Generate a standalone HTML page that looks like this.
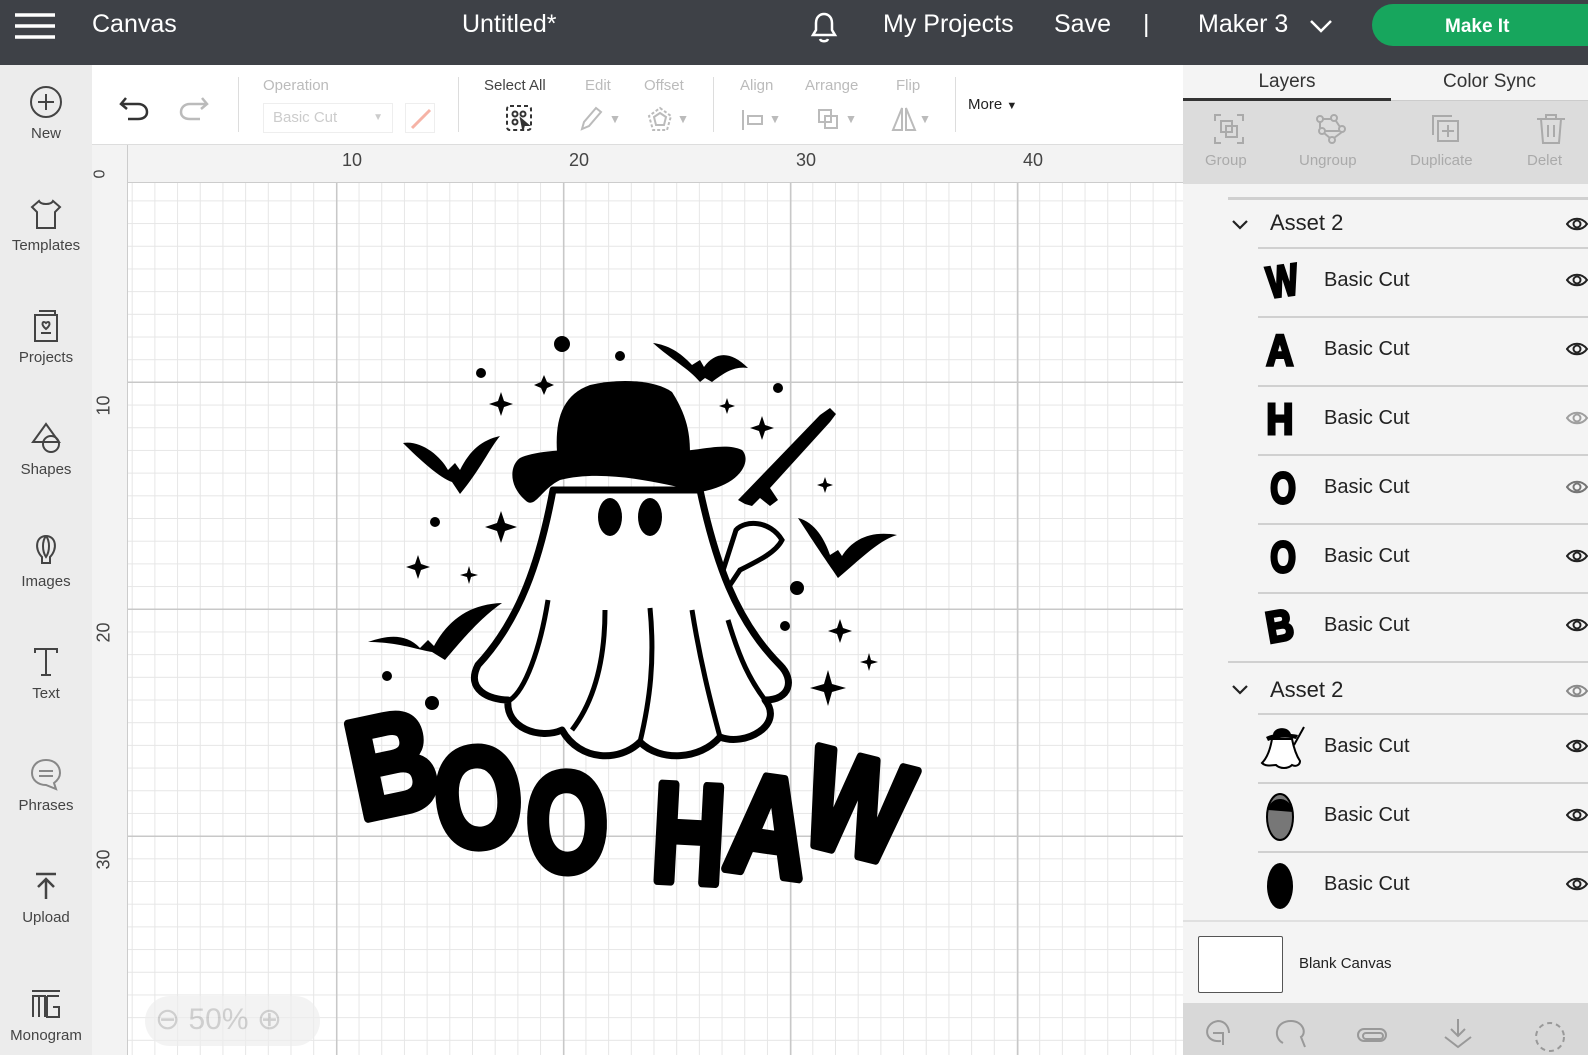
<!DOCTYPE html>
<html><head><meta charset="utf-8"><style>
*{margin:0;padding:0;box-sizing:border-box}
html{width:1588px;height:1055px;overflow:hidden}
body{width:1588px;height:1055px;overflow:hidden;position:relative;font-family:"Liberation Sans",sans-serif;background:#fff}
.abs{position:absolute}
#top{left:0;top:0;width:1588px;height:65px;background:#3e4147;color:#fff;overflow:hidden}
#top .t{position:absolute;top:10px;font-size:25px}
#make{left:1372px;top:4px;width:216px;height:42px;background:#17a65d;border-radius:21px 0 0 21px;color:#fff;font-size:19px;font-weight:bold;padding:12px 0 0 73px}
#side{left:0;top:65px;width:92px;height:990px;background:#ececec}
.si{position:absolute;left:0;width:92px;text-align:center;font-size:15px;color:#444}
.si svg{display:block;margin:0 auto 6px}
#tool{left:92px;top:65px;width:1091px;height:80px;background:#fff;border-bottom:1px solid #ddd}
.tl{position:absolute;font-size:15px;color:#bbb}
.sep{position:absolute;top:12px;width:1px;height:55px;background:#ddd}
#rtop{left:92px;top:145px;width:1091px;height:38px;background:#f3f3f3;border-bottom:1px solid #ccc}
#rleft{left:92px;top:145px;width:36px;height:910px;background:#f3f3f3;border-right:1px solid #ccc;overflow:hidden}
#cv{left:128px;top:183px;width:1055px;height:872px;overflow:hidden;background:#fff}
#grid{position:absolute;left:-19px;top:-27px;width:1100px;height:900px;
background-image:
linear-gradient(90deg,#c8c8c8 1.5px,transparent 1.5px),
linear-gradient(0deg,#c8c8c8 1.5px,transparent 1.5px),
linear-gradient(90deg,#e6e6e6 1px,transparent 1px),
linear-gradient(0deg,#e6e6e6 1px,transparent 1px);
background-size:227px 227px,227px 227px,22.7px 22.7px,22.7px 22.7px}
#panel{left:1183px;top:65px;width:405px;height:990px;background:#f4f4f4;overflow:hidden}
.row{position:absolute;left:1258px;width:330px;height:69px;border-top:2px solid #d0d0d0;overflow:hidden}
.row .n{position:absolute;left:66px;top:20px;font-size:20px;color:#222}
.eye{position:absolute;right:0;top:22px}
.hd{position:absolute;left:1228px;width:360px;border-top:2px solid #d0d0d0;height:50px;overflow:hidden}
.hd .n{position:absolute;left:42px;top:10px;font-size:22px;color:#222}
.lt{position:absolute;font:900 44px 'Liberation Sans',sans-serif;stroke:#000;-webkit-text-stroke:3px #000}
</style></head><body>

<div id="top" class="abs">
 <svg class="abs" style="left:15px;top:12px" width="40" height="28"><g stroke="#fff" stroke-width="3.5"><line x1="0" y1="3" x2="40" y2="3"/><line x1="0" y1="14" x2="40" y2="14"/><line x1="0" y1="25" x2="40" y2="25"/></g></svg>
 <div class="t" style="left:92px">Canvas</div>
 <div class="t" style="left:462px">Untitled*</div>
 <svg class="abs" style="left:808px;top:10px" width="32" height="34" fill="none" stroke="#fff" stroke-width="2.5"><path d="M5 25 L27 25 L24 20 L24 13 C24 7 20 4 16 4 C12 4 8 7 8 13 L8 20 Z"/><path d="M12 29 C13 32 19 32 20 29"/></svg>
 <div class="t" style="left:883px">My Projects</div>
 <div class="t" style="left:1054px">Save</div>
 <div class="t" style="left:1143px">|</div>
 <div class="t" style="left:1198px">Maker 3</div>
 <svg class="abs" style="left:1309px;top:18px" width="24" height="16" fill="none" stroke="#fff" stroke-width="2.5"><path d="M2 3 L12 13 L22 3"/></svg>
 <div id="make" class="abs">Make It</div>
</div>

<div id="side" class="abs">
 <div class="si" style="top:20px"><svg width="34" height="34" fill="none" stroke="#444" stroke-width="2"><circle cx="17" cy="17" r="15"/><path d="M17 9v16M9 17h16"/></svg>New</div>
 <div class="si" style="top:132px"><svg width="34" height="34" fill="none" stroke="#444" stroke-width="2"><path d="M10 4 L3 10 L8 15 L8 31 L26 31 L26 15 L31 10 L24 4 C22 8 12 8 10 4Z"/></svg>Templates</div>
 <div class="si" style="top:244px"><svg width="34" height="34" fill="none" stroke="#444" stroke-width="2"><rect x="6" y="6" width="22" height="26"/><path d="M10 2h16v4"/><path d="M12 24h10"/><path d="M17 20 C11 15 14 11 17 14 C20 11 23 15 17 20Z"/></svg>Projects</div>
 <div class="si" style="top:356px"><svg width="34" height="34" fill="none" stroke="#444" stroke-width="2"><path d="M17 3 L30 21 L4 21 Z"/><circle cx="22" cy="23" r="8"/></svg>Shapes</div>
 <div class="si" style="top:468px"><svg width="34" height="34" fill="none" stroke="#444" stroke-width="2"><path d="M17 3 C7 3 5 16 13 24 L13 30 L21 30 L21 24 C29 16 27 3 17 3Z"/><path d="M17 3 C13 8 13 18 17 24 C21 18 21 8 17 3"/></svg>Images</div>
 <div class="si" style="top:580px"><svg width="34" height="34" fill="none" stroke="#444" stroke-width="2"><path d="M6 8V4h22v4M17 4v26M12 30h10"/></svg>Text</div>
 <div class="si" style="top:692px"><svg width="34" height="34" fill="none" stroke="#888" stroke-width="2"><path d="M17 3 C8 3 3 9 3 16 C3 23 9 28 17 28 L27 32 L25 26 C29 23 31 20 31 16 C31 9 26 3 17 3Z"/><path d="M10 14h14M10 19h14"/></svg>Phrases</div>
 <div class="si" style="top:804px"><svg width="34" height="34" fill="none" stroke="#444" stroke-width="2.5"><path d="M7 5h20M17 30V10M9 18l8-8 8 8"/></svg>Upload</div>
 <div class="si" style="top:922px;height:68px;overflow:hidden"><svg width="34" height="34" fill="none" stroke="#444" stroke-width="2"><path d="M3 4h28M4 30V9h12v21M10 9v21M18 9h12M18 9v21h12V20h-6"/></svg>Monogram</div>
</div>

<div id="tool" class="abs">
 <svg class="abs" style="left:26px;top:30px" width="32" height="26" fill="none" stroke="#333" stroke-width="2.5"><path d="M8 3 L3 9 L9 14"/><path d="M3 9 H20 C26 9 29 13 29 17 C29 21 26 24 20 24 H10"/></svg>
 <svg class="abs" style="left:86px;top:30px" width="32" height="26" fill="none" stroke="#bbb" stroke-width="2.5"><path d="M24 3 L29 9 L23 14"/><path d="M29 9 H12 C6 9 3 13 3 17 C3 21 6 24 12 24 H22"/></svg>
 <div class="sep" style="left:146px"></div>
 <div class="tl" style="left:171px;top:12px">Operation</div>
 <div class="abs" style="left:171px;top:38px;width:130px;height:30px;border:1px solid #eee;font-size:15px;color:#ccc;padding:5px 9px">Basic Cut <span style="float:right;font-size:10px;margin-top:3px">▼</span></div>
 <div class="abs" style="left:313px;top:38px;width:30px;height:30px;border:1px solid #eee"><svg width="30" height="30"><line x1="6" y1="24" x2="24" y2="6" stroke="#f6b3a6" stroke-width="3"/></svg></div>
 <div class="sep" style="left:366px"></div>
 <div class="tl" style="left:392px;top:12px;color:#444">Select All</div>
 <svg class="abs" style="left:412px;top:38px" width="30" height="30" fill="none" stroke="#333" stroke-width="2"><rect x="3" y="3" width="24" height="24" rx="3" stroke-dasharray="4 3"/><circle cx="11" cy="11" r="2.5"/><circle cx="19" cy="11" r="2.5"/><circle cx="11" cy="19" r="2.5"/><path d="M17 16 L24 22 L20 22 L19 26Z" fill="#333"/></svg>
 <div class="tl" style="left:493px;top:12px">Edit</div>
 <svg class="abs" style="left:486px;top:40px" width="44" height="28" fill="none" stroke="#bbb" stroke-width="2"><path d="M4 24 L6 17 L18 3 L23 7 L11 21 Z"/><path d="M35 12 l4 0 l-2 4z" fill="#bbb"/></svg>
 <div class="tl" style="left:552px;top:12px">Offset</div>
 <svg class="abs" style="left:554px;top:40px" width="44" height="28" fill="none" stroke="#bbb" stroke-width="2"><path d="M14 3 L25 11 L21 25 L7 25 L3 11 Z" stroke-dasharray="3 2"/><path d="M14 8 L20 12 L18 20 L10 20 L8 12 Z"/><path d="M35 12 l4 0 l-2 4z" fill="#bbb"/></svg>
 <div class="sep" style="left:621px"></div>
 <div class="tl" style="left:648px;top:12px">Align</div>
 <svg class="abs" style="left:648px;top:42px" width="44" height="26" fill="none" stroke="#bbb" stroke-width="2"><path d="M3 3v20"/><rect x="8" y="9" width="14" height="8"/><path d="M33 10 l4 0 l-2 4z" fill="#bbb"/></svg>
 <div class="tl" style="left:713px;top:12px">Arrange</div>
 <svg class="abs" style="left:724px;top:42px" width="44" height="26" fill="none" stroke="#bbb" stroke-width="2"><rect x="3" y="3" width="12" height="12"/><rect x="9" y="9" width="12" height="12"/><path d="M33 10 l4 0 l-2 4z" fill="#bbb"/></svg>
 <div class="tl" style="left:804px;top:12px">Flip</div>
 <svg class="abs" style="left:798px;top:40px" width="44" height="28" fill="none" stroke="#bbb" stroke-width="2"><path d="M12 3 L3 25 H12Z M16 3 L25 25 H16Z"/><path d="M33 12 l4 0 l-2 4z" fill="#bbb"/></svg>
 <div class="sep" style="left:863px"></div>
 <div class="tl" style="left:876px;top:31px;color:#222">More <span style="font-size:11px">▼</span></div>
</div>

<div id="rtop" class="abs">
 <div class="abs" style="left:250px;top:5px;font-size:18px;color:#444">10</div>
 <div class="abs" style="left:477px;top:5px;font-size:18px;color:#444">20</div>
 <div class="abs" style="left:704px;top:5px;font-size:18px;color:#444">30</div>
 <div class="abs" style="left:931px;top:5px;font-size:18px;color:#444">40</div>
</div>
<div id="rleft" class="abs">
 <div class="abs" style="left:4px;top:20px;font-size:16px;color:#444;transform:rotate(-90deg)">0</div>
 <div class="abs" style="left:2px;top:250px;font-size:18px;color:#444;transform:rotate(-90deg)">10</div>
 <div class="abs" style="left:2px;top:477px;font-size:18px;color:#444;transform:rotate(-90deg)">20</div>
 <div class="abs" style="left:2px;top:704px;font-size:18px;color:#444;transform:rotate(-90deg)">30</div>
</div>
<div id="cv" class="abs"><div id="grid"></div></div>

<div class="abs" style="left:145px;top:996px;width:175px;height:50px;background:#eee;border-radius:25px;opacity:.7;font-size:30px;color:#bbb;padding:6px 10px">⊖ 50% ⊕</div>

<svg class="abs" style="left:0;top:0" width="1183" height="1055">
 <g fill="#000">
  <circle cx="562" cy="344" r="8"/><circle cx="620" cy="356" r="5"/><circle cx="481" cy="373" r="5"/><circle cx="778" cy="388" r="5"/>
  <circle cx="435" cy="522" r="5"/><circle cx="797" cy="588" r="7"/><circle cx="785" cy="626" r="5"/><circle cx="387" cy="676" r="5"/><circle cx="432" cy="703" r="7"/>
  <path d="M544 375 l3 7 7 3 -7 3 -3 7 -3 -7 -7 -3 7 -3z"/>
  <path d="M501 392 l3 9 9 3 -9 3 -3 9 -3 -9 -9 -3 9 -3z"/>
  <path d="M727 398 l2 6 6 2 -6 2 -2 6 -2 -6 -6 -2 6 -2z"/>
  <path d="M762 416 l3 9 9 3 -9 3 -3 9 -3 -9 -9 -3 9 -3z"/>
  <path d="M825 477 l2 6 6 2 -6 2 -2 6 -2 -6 -6 -2 6 -2z"/>
  <path d="M501 511 l4 12 12 4 -12 4 -4 12 -4 -12 -12 -4 12 -4z"/>
  <path d="M418 555 l3 9 9 3 -9 3 -3 9 -3 -9 -9 -3 9 -3z"/>
  <path d="M469 566 l2 7 7 2 -7 2 -2 7 -2 -7 -7 -2 7 -2z"/>
  <path d="M840 619 l3 9 9 3 -9 3 -3 9 -3 -9 -9 -3 9 -3z"/>
  <path d="M869 653 l2 7 7 2 -7 2 -2 7 -2 -7 -7 -2 7 -2z"/>
  <path d="M828 670 l4 14 14 4 -14 4 -4 14 -4 -14 -14 -4 14 -4z"/>
  <path d="M653 343 C668 345 680 352 692 365 L700 360 L704 367 C715 352 730 350 748 368 C735 366 725 372 712 382 L705 378 L700 382 C688 368 672 360 653 343Z"/>
  <path d="M403 443 C420 440 440 455 448 470 L455 463 L460 470 C470 450 482 440 500 436 C490 448 480 470 460 494 L452 482 C440 478 420 460 403 443Z"/>
  <path d="M798 518 C815 522 825 540 830 555 L838 550 L842 556 C852 540 870 530 897 535 C880 540 865 555 838 578 C833 570 825 560 798 518Z"/>
  <path d="M368 642 C385 636 405 632 420 648 L428 640 L434 646 C448 620 470 604 502 603 C485 615 470 630 445 660 L432 652 C418 650 398 642 368 642Z"/>
  <path d="M738 500 L820 415 L830 408 L836 414 L830 422 L770 488 L778 500 L770 506 L760 498 L752 506 L745 504Z"/>
  <path d="M720 580 L736 530 C745 520 770 520 782 540 C776 552 760 560 740 570 L728 588Z" fill="#fff" stroke="#000" stroke-width="5"/>
  <path d="M553 490 C540 560 520 620 478 665 C465 690 490 700 508 700 C505 728 540 740 562 730 C580 762 620 762 640 742 C660 762 700 760 720 737 C745 747 785 725 765 700 C790 700 795 680 780 665 C735 620 715 560 700 490 Z" fill="#fff" stroke="#000" stroke-width="7" stroke-linejoin="round"/>
  <path d="M548 600 C540 650 525 690 510 700 M605 610 C605 660 595 700 572 730 M650 608 C655 660 650 700 640 742 M692 610 C700 660 710 700 720 737 M728 620 C740 660 750 680 765 700" fill="none" stroke="#000" stroke-width="5"/>
  <ellipse cx="610" cy="517" rx="12" ry="19"/><ellipse cx="650" cy="517" rx="12" ry="19"/>
  <path d="M520 458 C540 448 600 448 640 452 C690 456 720 440 742 450 C752 460 742 485 700 492 C650 480 600 470 560 480 C540 490 535 510 525 500 C508 485 510 465 520 458Z"/>
  <path d="M557 452 C555 420 562 395 590 385 C620 378 655 380 672 392 C690 420 690 440 690 458 C650 462 600 462 557 452Z"/>
 </g>
 <g font-family="Liberation Sans,sans-serif" font-weight="900" font-size="140" fill="#000" stroke="#000" stroke-width="9" stroke-linejoin="round">
  <text transform="translate(360,820) rotate(-12) scale(0.85,1)">B</text>
  <text transform="translate(440,850) rotate(-6) scale(0.8,1)">O</text>
  <text transform="translate(528,872) rotate(-2) scale(0.75,1)">O</text>
  <text transform="translate(650,880) rotate(3) scale(0.72,1)">H</text>
  <text transform="translate(722,868) rotate(8) scale(0.8,1)">A</text>
  <text transform="translate(795,840) rotate(14) scale(0.78,1)">W</text>
 </g>
</svg>

<div id="panel" class="abs">
 <div class="abs" style="left:0;top:0;width:208px;height:36px;border-bottom:3px solid #333;text-align:center;font-size:19px;color:#333;padding-top:6px">Layers</div>
 <div class="abs" style="left:208px;top:0;width:197px;height:36px;border-bottom:1px solid #ccc;text-align:center;font-size:19px;color:#333;padding-top:6px">Color Sync</div>
 <div class="abs" style="left:0;top:36px;width:405px;height:83px;background:#dcdcdc;color:#aaa;font-size:15px;overflow:hidden">
  <svg class="abs" style="left:30px;top:12px" width="32" height="32" fill="none" stroke="#aaa" stroke-width="2"><path d="M2 8V2h6M24 2h6v6M30 24v6h-6M8 30H2v-6"/><rect x="8" y="8" width="11" height="11"/><rect x="13" y="13" width="11" height="11"/></svg>
  <div class="abs" style="left:22px;top:51px">Group</div>
  <svg class="abs" style="left:131px;top:12px" width="34" height="32" fill="none" stroke="#aaa" stroke-width="2"><circle cx="6" cy="6" r="3"/><circle cx="20" cy="5" r="3"/><circle cx="28" cy="16" r="3"/><circle cx="8" cy="18" r="3"/><circle cx="18" cy="27" r="3"/><path d="M6 9v6M9 6h8M22 8l4 6M11 18h14M10 20l6 5M28 19l-8 6"/></svg>
  <div class="abs" style="left:116px;top:51px">Ungroup</div>
  <svg class="abs" style="left:247px;top:12px" width="32" height="32" fill="none" stroke="#aaa" stroke-width="2"><path d="M3 22V3h19"/><rect x="8" y="8" width="20" height="20"/><path d="M18 12v12M12 18h12"/></svg>
  <div class="abs" style="left:227px;top:51px">Duplicate</div>
  <svg class="abs" style="left:352px;top:12px" width="32" height="32" fill="none" stroke="#aaa" stroke-width="2"><path d="M2 6h28M11 6V2h10v4M6 6l2 24h16l2-24M13 12v12M19 12v12"/></svg>
  <div class="abs" style="left:344px;top:51px;white-space:nowrap">Delet</div>
 </div>
</div>
<div class="abs" style="left:1228px;top:197px;width:360px;border-top:2px solid #d0d0d0"></div>

<svg width="0" height="0" style="position:absolute"><defs><g id="eyeg"><path d="M1 9 C6 2 16 2 21 9 C16 16 6 16 1 9Z" fill="none" stroke="#222" stroke-width="2"/><circle cx="11" cy="9" r="3.5" fill="none" stroke="#222" stroke-width="2"/></g></defs></svg>

<div class="hd" style="top:198px"><svg class="abs" style="left:2px;top:18px" width="20" height="14"><path d="M3 3l7 7 7-7" fill="none" stroke="#222" stroke-width="2.2"/></svg><div class="n">Asset 2</div><svg class="eye" style="top:15px" width="22" height="18"><use href="#eyeg"/></svg></div>

<div class="row" style="top:247px"><div class="lt" style="left:4px;top:8px;transform:rotate(-8deg) scale(.75,1)">W</div><div class="n">Basic Cut</div><svg class="eye" width="22" height="18"><use href="#eyeg"/></svg></div>
<div class="row" style="top:316px"><div class="lt" style="left:6px;top:8px;transform:scale(.85,1)">A</div><div class="n">Basic Cut</div><svg class="eye" width="22" height="18"><use href="#eyeg"/></svg></div>
<div class="row" style="top:385px"><div class="lt" style="left:6px;top:8px;transform:scale(.85,1)">H</div><div class="n">Basic Cut</div><svg class="eye" width="22" height="18" opacity=".4"><use href="#eyeg"/></svg></div>
<div class="row" style="top:454px"><div class="lt" style="left:8px;top:8px;transform:scale(.75,1)">O</div><div class="n">Basic Cut</div><svg class="eye" width="22" height="18" opacity=".6"><use href="#eyeg"/></svg></div>
<div class="row" style="top:523px"><div class="lt" style="left:8px;top:8px;transform:scale(.75,1)">O</div><div class="n">Basic Cut</div><svg class="eye" width="22" height="18"><use href="#eyeg"/></svg></div>
<div class="row" style="top:592px"><div class="lt" style="left:6px;top:8px;transform:rotate(-10deg) scale(.85,1)">B</div><div class="n">Basic Cut</div><svg class="eye" width="22" height="18"><use href="#eyeg"/></svg></div>

<div class="hd" style="top:661px"><svg class="abs" style="left:2px;top:20px" width="20" height="14"><path d="M3 3l7 7 7-7" fill="none" stroke="#222" stroke-width="2.2"/></svg><div class="n" style="top:14px">Asset 2</div><svg class="eye" style="top:19px" width="22" height="18" opacity=".5"><use href="#eyeg"/></svg></div>

<div class="row" style="top:713px"><svg class="abs" style="left:0;top:6px" width="48" height="50"><path d="M14 18 C12 30 8 38 4 42 C8 46 14 44 18 44 C22 48 30 48 34 44 C38 46 42 44 42 40 C38 34 36 28 34 18Z" fill="#fff" stroke="#000" stroke-width="2"/><path d="M8 16 C15 12 30 12 40 14 L38 18 C30 16 20 16 10 20Z M15 14 C15 6 30 4 33 13Z"/><path d="M36 24 L46 6" stroke="#000" stroke-width="2"/></svg><div class="n">Basic Cut</div><svg class="eye" width="22" height="18"><use href="#eyeg"/></svg></div>
<div class="row" style="top:782px"><svg class="abs" style="left:8px;top:8px" width="30" height="50"><ellipse cx="14" cy="25" rx="13" ry="23" fill="#777" stroke="#000" stroke-width="2"/><path d="M2 18 C4 4 24 2 27 20Z" fill="#000"/></svg><div class="n">Basic Cut</div><svg class="eye" width="22" height="18"><use href="#eyeg"/></svg></div>
<div class="row" style="top:851px"><svg class="abs" style="left:8px;top:8px" width="30" height="50"><ellipse cx="14" cy="25" rx="13" ry="23" fill="#000"/></svg><div class="n">Basic Cut</div><svg class="eye" width="22" height="18"><use href="#eyeg"/></svg></div>
<div class="abs" style="left:1183px;top:920px;width:405px;height:2px;background:#e0e0e0"></div>

<div class="abs" style="left:1198px;top:936px;width:85px;height:57px;background:#fff;border:1.5px solid #555;border-radius:2px"></div>
<div class="abs" style="left:1299px;top:955px;font-size:15px;color:#222">Blank Canvas</div>
<div class="abs" style="left:1183px;top:1003px;width:405px;height:52px;background:#d8d8d8;overflow:hidden">
 <svg width="405" height="52" fill="none" stroke="#999" stroke-width="2">
  <path d="M38 38 C20 40 20 20 35 18 C42 18 46 24 46 30"/><path d="M30 30h10v12"/>
  <path d="M100 40 C90 35 92 18 108 18 C120 18 124 30 118 34 L122 44"/>
  <rect x="175" y="26" width="28" height="12" rx="6"/><rect x="180" y="30" width="20" height="6" rx="3"/>
  <path d="M275 16v16M268 26l7 7 7-7M262 34l13 10 13-10"/>
  <circle cx="367" cy="34" r="14" stroke-dasharray="5 4"/>
 </svg>
</div>
</body></html>
